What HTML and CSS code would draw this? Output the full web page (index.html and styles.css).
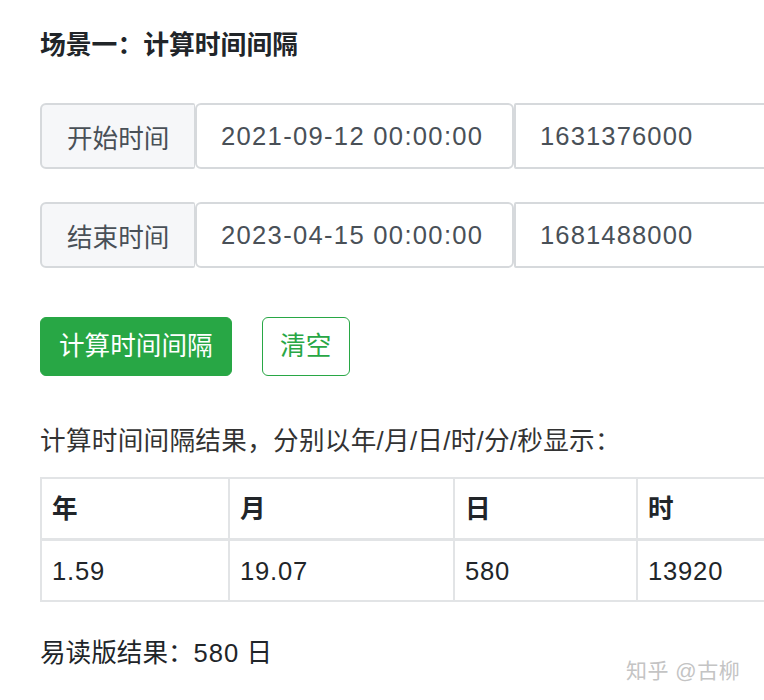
FILE: index.html
```html
<!DOCTYPE html>
<html lang="zh-CN">
<head>
<meta charset="utf-8">
<title>场景一：计算时间间隔</title>
<link rel="stylesheet" href="styles.css">
</head>
<body>
<div class="page">
  <h1 class="title">场景一：计算时间间隔</h1>

  <div class="input-group">
    <span class="addon">开始时间</span>
    <div class="field field-date">2021-09-12 00:00:00</div>
    <div class="field field-ts">1631376000</div>
  </div>

  <div class="input-group input-group-last">
    <span class="addon">结束时间</span>
    <div class="field field-date">2023-04-15 00:00:00</div>
    <div class="field field-ts">1681488000</div>
  </div>

  <div class="actions">
    <button class="btn btn-success">计算时间间隔</button>
    <button class="btn btn-outline">清空</button>
  </div>

  <p class="desc">计算时间间隔结果，分别以年/月/日/时/分/秒显示：</p>

  <table class="result">
    <thead>
      <tr><th class="c1">年</th><th class="c2">月</th><th class="c3">日</th><th class="c4">时</th></tr>
    </thead>
    <tbody>
      <tr><td>1.59</td><td>19.07</td><td>580</td><td>13920</td></tr>
    </tbody>
  </table>

  <p class="readable">易读版结果：<span class="num">580</span> 日</p>
</div>
<div class="watermark">知乎 @古柳</div>
</body>
</html>
```

FILE: styles.css
```css
html, body {
  margin: 0;
  padding: 0;
  overflow: hidden;
  background: #ffffff;
}

body {
  font-family: "Liberation Sans", "Noto Sans CJK SC", sans-serif;
  font-size: 25.6px;
  color: #212529;
  width: 764px;
  height: 700px;
  position: relative;
}

.page {
  padding: 30px 0 0 40px;
  width: 1300px;
}

.title {
  font-size: 25.8px;
  font-weight: 700;
  line-height: 31px;
  margin: 0 0 42px;
  color: #212529;
}

.input-group {
  display: flex;
  height: 66px;
  margin-bottom: 33px;
}

.input-group-last {
  margin-bottom: 49px;
}

.addon,
.field {
  box-sizing: border-box;
  height: 66px;
  display: flex;
  align-items: center;
  border: 2px solid #d6d9dc;
  border-radius: 6px;
  color: #495057;
  font-size: 25.6px;
}

.addon {
  width: 155px;
  padding: 0 0 0 25px;
  background: #f6f7f9;
  border-right-width: 1px;
  border-top-right-radius: 2px;
  border-bottom-right-radius: 2px;
}

.field-date {
  width: 319px;
  padding-left: 24px;
  background: #fff;
  letter-spacing: 1.3px;
}

.field-ts {
  width: 420px;
  padding-left: 24px;
  background: #fff;
  border-top-left-radius: 2px;
  border-bottom-left-radius: 2px;
  letter-spacing: 1.1px;
}

.actions {
  display: flex;
  gap: 30px;
  margin-bottom: 46px;
}

.btn {
  box-sizing: border-box;
  height: 59px;
  font-family: inherit;
  font-size: 25.6px;
  line-height: 1;
  border-radius: 6px;
  padding: 0 18px;
  cursor: pointer;
}

.btn-success {
  background: #28a745;
  border: 1px solid #28a745;
  color: #ffffff;
}

.btn-outline {
  background: #ffffff;
  border: 1.5px solid #28a745;
  color: #28a745;
  padding: 0 17.5px;
}

.desc {
  margin: 0 0 17px;
  line-height: 38px;
  color: #333;
  letter-spacing: 0.3px;
}

.result {
  border-collapse: collapse;
  border-top: 2px solid #e2e4e6;
  border-left: 2px solid #e2e4e6;
  table-layout: fixed;
  margin-bottom: 32px;
}

.result th,
.result td {
  border: 2px solid #e2e4e6;
  border-top: none;
  padding: 0 10px;
  height: 59px;
  text-align: left;
  line-height: 38px;
  color: #212529;
}

.result td {
  letter-spacing: 0.8px;
}

.result th {
  font-weight: 700;
  border-bottom-width: 3px;
}

.result .c1 { width: 166px; }
.result .c2 { width: 203px; }
.result .c3 { width: 161px; }
.result .c4 { width: 200px; }

.readable {
  margin: 0;
  line-height: 38px;
  color: #212529;
}

.readable .num {
  letter-spacing: 1px;
}

.watermark {
  position: absolute;
  left: 626px;
  top: 658px;
  font-size: 21px;
  line-height: 26px;
  color: #c4c4c4;
  letter-spacing: 0.5px;
}
```
